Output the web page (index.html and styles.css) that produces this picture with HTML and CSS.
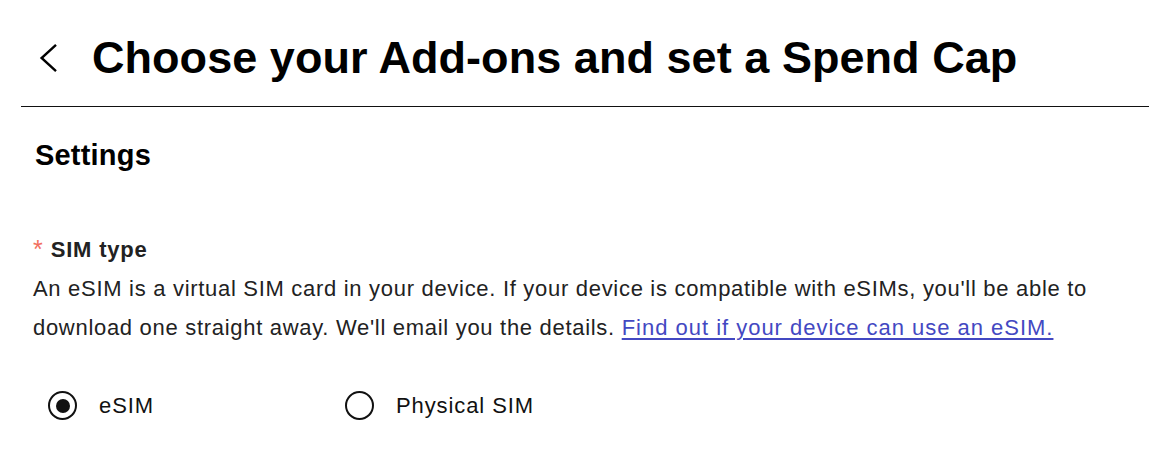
FILE: index.html
```html
<!DOCTYPE html>
<html lang="en">
<head>
<meta charset="utf-8">
<title>Choose your Add-ons and set a Spend Cap</title>
<link rel="stylesheet" href="styles.css">
</head>
<body>
  <header class="page-header">
    <button class="back-btn" aria-label="Back">
      <svg width="20" height="30" viewBox="0 0 20 30" aria-hidden="true">
        <path d="M18 1.8 L3.6 15 L18 28.2" fill="none" stroke="#000" stroke-width="2.4" stroke-linecap="butt" stroke-linejoin="miter"/>
      </svg>
    </button>
    <h1 class="page-title">Choose your Add-ons and set a Spend Cap</h1>
  </header>

  <main class="content">
    <h2 class="section-title">Settings</h2>

    <fieldset class="field">
      <legend class="field-label"><span class="required">*</span>SIM type</legend>
      <p class="field-help">An eSIM is a virtual SIM card in your device. If your device is compatible with eSIMs, you'll be able to download one straight away. We'll email you the details. <a href="#" class="link">Find out if your device can use an eSIM.</a></p>

      <div class="radio-group">
        <label class="radio-item">
          <span class="radio radio-checked"></span>
          <span class="radio-text">eSIM</span>
        </label>
        <label class="radio-item">
          <span class="radio"></span>
          <span class="radio-text">Physical SIM</span>
        </label>
      </div>
    </fieldset>
  </main>
</body>
</html>
```

FILE: styles.css
```css
* {
  box-sizing: border-box;
}

html, body {
  margin: 0;
  padding: 0;
  background: #ffffff;
}

body {
  font-family: "Liberation Sans", Arial, Helvetica, sans-serif;
  color: #222222;
}

.page-header {
  margin-left: 21px;
  padding: 31px 0 21px 17px;
  border-bottom: 1px solid #111111;
  display: flex;
  align-items: center;
  gap: 34px;
}

.back-btn {
  border: 0;
  background: none;
  padding: 0;
  margin: 0;
  width: 20px;
  height: 30px;
  display: flex;
  cursor: pointer;
}

.page-title {
  margin: 0;
  font-size: 45px;
  line-height: 54px;
  font-weight: 700;
  color: #000000;
  letter-spacing: 0.05px;
}

.content {
  padding: 31px 0 0 33px;
}

.section-title {
  margin: 0 0 0 2px;
  font-size: 29px;
  line-height: 34px;
  font-weight: 700;
  color: #000000;
  letter-spacing: 0.2px;
}

.field {
  border: 0;
  margin: 65px 0 0 0;
  padding: 0;
  min-width: 0;
}

.field-label {
  padding: 0;
  font-size: 22px;
  line-height: 26px;
  font-weight: 700;
  color: #222222;
  letter-spacing: 0.8px;
  display: flex;
  align-items: flex-start;
}

.required {
  color: #f2705f;
  font-weight: 400;
  font-size: 25px;
  line-height: 24px;
  margin-right: 8px;
  letter-spacing: 0;
}

.field-help {
  margin: 6px 0 0 0;
  font-size: 22px;
  line-height: 39px;
  letter-spacing: 0.7px;
  color: #222222;
  max-width: 1090px;
}

.link {
  color: #4348c2;
  letter-spacing: 0.98px;
  text-decoration: underline;
  text-underline-offset: 3px;
}

.radio-group {
  display: flex;
  margin-top: 44px;
  padding-left: 15px;
}

.radio-item {
  width: 297px;
  display: flex;
  align-items: center;
  gap: 22px;
  cursor: pointer;
}

.radio-item:last-child {
  width: auto;
}

.radio {
  width: 29px;
  height: 29px;
  border: 2.5px solid #111111;
  border-radius: 50%;
  display: flex;
  align-items: center;
  justify-content: center;
  flex: none;
}

.radio-checked::after {
  content: "";
  width: 14px;
  height: 14px;
  border-radius: 50%;
  background: #111111;
}

.radio-text {
  font-size: 22px;
  line-height: 28px;
  letter-spacing: 0.9px;
  color: #111111;
}
```
